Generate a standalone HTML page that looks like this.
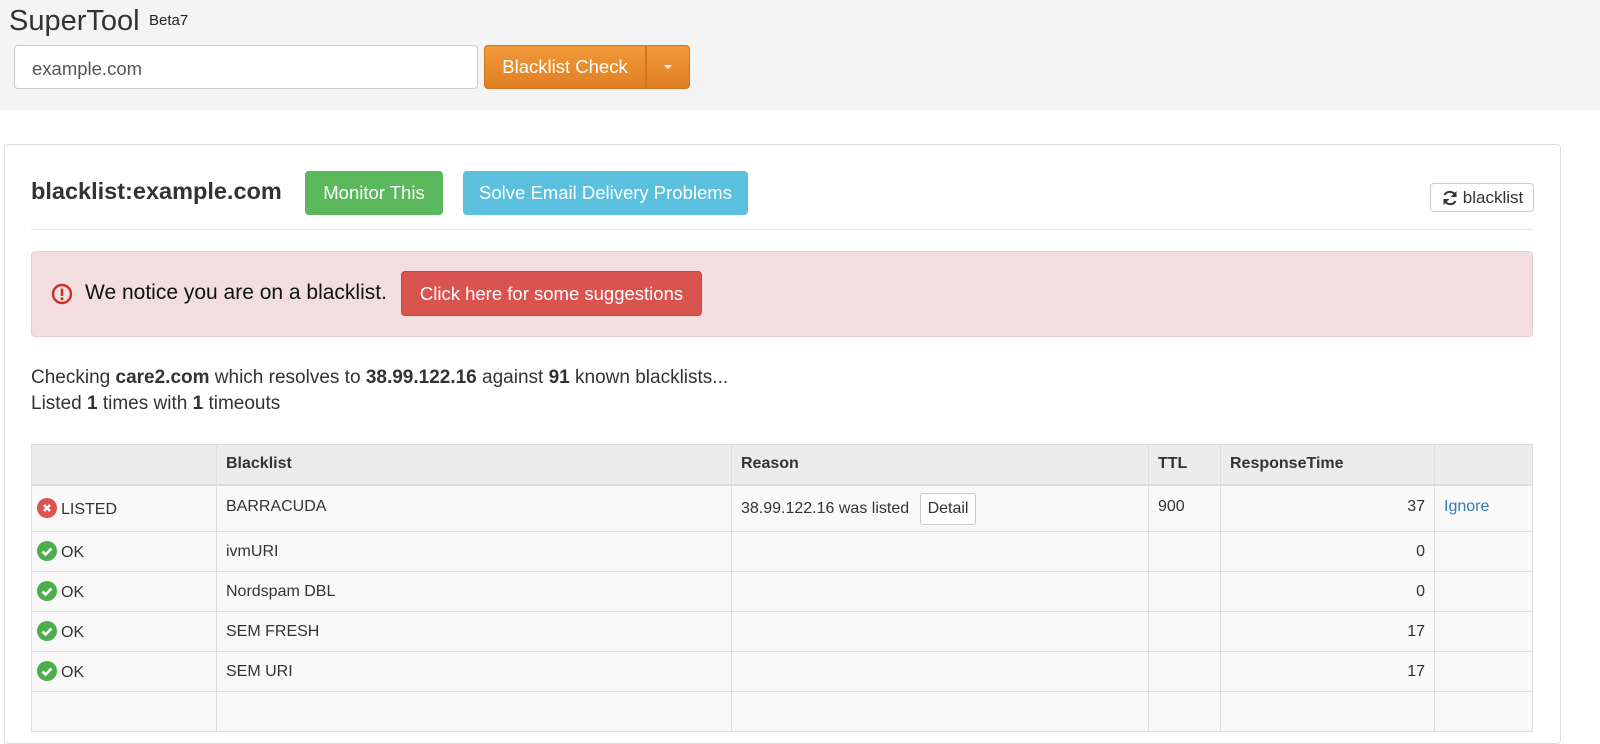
<!DOCTYPE html>
<html><head><style>
body{margin:0;width:1600px;height:708px;overflow:hidden;background:#fff;font-family:"Liberation Sans",Arial,sans-serif;color:#333;position:relative}
.a{position:absolute}
.btn{position:absolute;color:#fff;font-size:18.5px;border-radius:4px;display:flex;align-items:center;justify-content:center;box-sizing:border-box}
table{position:absolute;left:31px;top:444px;width:1502px;border-collapse:collapse;font-size:16px}
td,th{border:1px solid #ddd;padding:0 9px;text-align:left;vertical-align:middle;box-sizing:border-box}
th{background:#ececec;height:40px;border-bottom:2px solid #ddd}
td{background:#f9f9f9;height:40px}
tr.r1 td{height:47px;vertical-align:top;padding-top:12px}
.ic{display:inline-block;width:20px;height:20px;border-radius:50%;vertical-align:-4px;margin-right:4px;position:relative}
</style></head><body>
<div class="a" style="left:0;top:0;width:1600px;height:110px;background:#f4f4f4"></div>
<div class="a" style="left:9px;top:5px;font-size:29px;color:#333">SuperTool</div>
<div class="a" style="left:149px;top:12px;font-size:15px;color:#222">Beta7</div>
<div class="a" style="left:14px;top:45px;width:464px;height:44px;box-sizing:border-box;border:1px solid #ccc;border-radius:4px;background:#fff;font-size:18.5px;color:#555;padding:12px 17px">example.com</div>
<div class="btn" style="left:484px;top:45px;width:162px;height:44px;background:linear-gradient(#f29a3b,#df7f22);border:1px solid #d2761e;border-radius:4px 0 0 4px">Blacklist Check</div>
<div class="btn" style="left:646px;top:45px;width:44px;height:44px;background:linear-gradient(#f29a3b,#df7f22);border:1px solid #d2761e;border-radius:0 4px 4px 0"><span style="border-left:4px solid transparent;border-right:4px solid transparent;border-top:4px solid #fff"></span></div>

<div class="a" style="left:4px;top:144px;width:1557px;height:600px;box-sizing:border-box;border:1px solid #ddd;border-radius:4px"></div>
<div class="a" style="left:31px;top:178px;font-size:23.5px;font-weight:bold;color:#333">blacklist:example.com</div>
<div class="btn" style="left:305px;top:171px;width:138px;height:44px;background:#5cb85c">Monitor This</div>
<div class="btn" style="left:463px;top:171px;width:285px;height:44px;background:#5bc0de">Solve Email Delivery Problems</div>
<div class="btn" style="left:1430px;top:183px;width:104px;height:29px;border:1px solid #ccc;color:#333;font-size:17px;background:#fff">
<svg width="18" height="18" viewBox="0 0 18 18" style="margin-right:4px"><path d="M14.5 7A6 6 0 0 0 3.5 6M3.5 11A6 6 0 0 0 14.5 12" fill="none" stroke="#333" stroke-width="2"/><path d="M15.5 2v6h-6z M2.5 16v-6h6z" fill="#333"/></svg>blacklist</div>
<div class="a" style="left:31px;top:229px;width:1502px;height:1px;background:#e6e6e6"></div>

<div class="a" style="left:31px;top:251px;width:1502px;height:86px;box-sizing:border-box;background:#f2dede;border:1px solid #ebccd1;border-radius:4px"></div>
<svg class="a" style="left:51px;top:283px" width="22" height="22" viewBox="0 0 22 22"><circle cx="11" cy="11" r="9" fill="none" stroke="#c9302c" stroke-width="2.4"/><rect x="9.7" y="5.5" width="2.6" height="7.5" rx="1" fill="#c9302c"/><circle cx="11" cy="15.8" r="1.5" fill="#c9302c"/></svg>
<div class="a" style="left:85px;top:281px;font-size:21px;color:#111">We notice you are on a blacklist.</div>
<div class="btn" style="left:401px;top:271px;width:301px;height:45px;background:#d9534f;border:1px solid #d43f3a">Click here for some suggestions</div>

<div class="a" style="left:31px;top:365px;font-size:19px;line-height:26px;color:#333;white-space:nowrap">Checking <b>care2.com</b> which resolves to <b>38.99.122.16</b> against <b>91</b> known blacklists...<br>Listed <b>1</b> times with <b>1</b> timeouts</div>

<table>
<tr><th style="width:185px"></th><th style="width:515px">Blacklist</th><th style="width:417px">Reason</th><th style="width:72px">TTL</th><th style="width:214px">ResponseTime</th><th></th></tr>
<tr class="r1"><td style="padding-left:5px"><span class="ic" style="background:#d9534f"><svg width="20" height="20" class="a" style="left:0;top:0"><path d="M7 7l6 6M13 7l-6 6" stroke="#fff" stroke-width="2.4"/></svg></span>LISTED</td><td>BARRACUDA</td><td style="padding-top:7px">38.99.122.16 was listed <span style="display:inline-block;border:1px solid #ccc;border-radius:3px;padding:6px 7px;margin-left:6px;background:#fff">Detail</span></td><td>900</td><td style="text-align:right">37</td><td style="color:#337ab7">Ignore</td></tr>
<tr><td style="padding-left:5px"><span class="ic" style="background:#4cae4c"><svg width="20" height="20" class="a" style="left:0;top:0"><path d="M5.5 10.5l3 3 6-6" stroke="#fff" stroke-width="2.6" fill="none"/></svg></span>OK</td><td>ivmURI</td><td></td><td></td><td style="text-align:right">0</td><td></td></tr>
<tr><td style="padding-left:5px"><span class="ic" style="background:#4cae4c"><svg width="20" height="20" class="a" style="left:0;top:0"><path d="M5.5 10.5l3 3 6-6" stroke="#fff" stroke-width="2.6" fill="none"/></svg></span>OK</td><td>Nordspam DBL</td><td></td><td></td><td style="text-align:right">0</td><td></td></tr>
<tr><td style="padding-left:5px"><span class="ic" style="background:#4cae4c"><svg width="20" height="20" class="a" style="left:0;top:0"><path d="M5.5 10.5l3 3 6-6" stroke="#fff" stroke-width="2.6" fill="none"/></svg></span>OK</td><td>SEM FRESH</td><td></td><td></td><td style="text-align:right">17</td><td></td></tr>
<tr><td style="padding-left:5px"><span class="ic" style="background:#4cae4c"><svg width="20" height="20" class="a" style="left:0;top:0"><path d="M5.5 10.5l3 3 6-6" stroke="#fff" stroke-width="2.6" fill="none"/></svg></span>OK</td><td>SEM URI</td><td></td><td></td><td style="text-align:right">17</td><td></td></tr>
<tr><td></td><td></td><td></td><td></td><td></td><td></td></tr>
</table>
</body></html>
